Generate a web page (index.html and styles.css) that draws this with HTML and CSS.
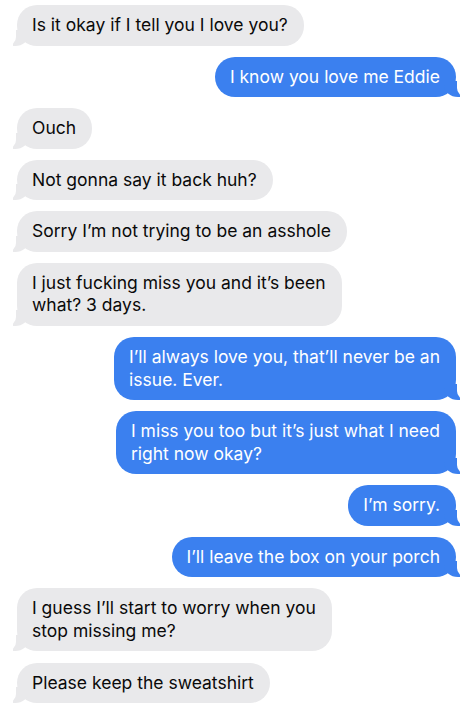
FILE: index.html
```html
<!DOCTYPE html>
<html lang="en">
<head>
<meta charset="UTF-8" />
<meta name="viewport" content="width=device-width, initial-scale=1" />
<title>Messages</title>
<link rel="stylesheet" href="styles.css">
</head>
<body>

<div class="thread">
  <div class="bubble them">Is it okay if I tell you I love you?</div>
  <div class="bubble me">I know you love me Eddie</div>
  <div class="bubble them">Ouch</div>
  <div class="bubble them">Not gonna say it back huh?</div>
  <div class="bubble them">Sorry I’m not trying to be an asshole</div>
  <div class="bubble them">I just fucking miss you and it’s been<br>what? 3 days.</div>
  <div class="bubble me">I’ll always love you, that’ll never be an<br>issue. Ever.</div>
  <div class="bubble me">I miss you too but it’s just what I need<br>right now okay?</div>
  <div class="bubble me">I’m sorry.</div>
  <div class="bubble me">I’ll leave the box on your porch</div>
  <div class="bubble them">I guess I’ll start to worry when you<br>stop missing me?</div>
  <div class="bubble them">Please keep the sweatshirt</div>
</div>

</body>
</html>
```

FILE: styles.css
```css
/* iMessage style thread */
body {
  margin: 0;
  background-color: #fff;
  font-family: 'Inter', 'Liberation Sans', sans-serif;
}
.thread {
  display: flex;
  flex-direction: column;
  gap: 11.1px;
  padding: 5px 18px 0 17px;
}
.bubble {
  position: relative;
  max-width: 350px;
  padding: 9px 16px 9px 15px;
  border-radius: 20px;
  font-size: 17.5px;
  line-height: 22.5px;
}
.bubble::before,
.bubble::after {
  content: "";
  position: absolute;
  bottom: 0;
  height: 16px;
}
.them {
  align-self: flex-start;
  background-color: #e9e9eb;
  color: #0a0a0a;
}
.them::before {
  left: -4px;
  width: 16px;
  background-color: #e9e9eb;
  border-bottom-right-radius: 14px 12px;
}
.them::after {
  left: -16px;
  width: 15px;
  background-color: #fff;
  border-bottom-right-radius: 9px;
}
.me {
  align-self: flex-end;
  background-color: #3b80ef;
  color: #fff;
}
.me::before {
  right: -4px;
  width: 16px;
  background-color: #3b80ef;
  border-bottom-left-radius: 14px 12px;
}
.me::after {
  right: -16px;
  width: 15px;
  background-color: #fff;
  border-bottom-left-radius: 9px;
}
```
